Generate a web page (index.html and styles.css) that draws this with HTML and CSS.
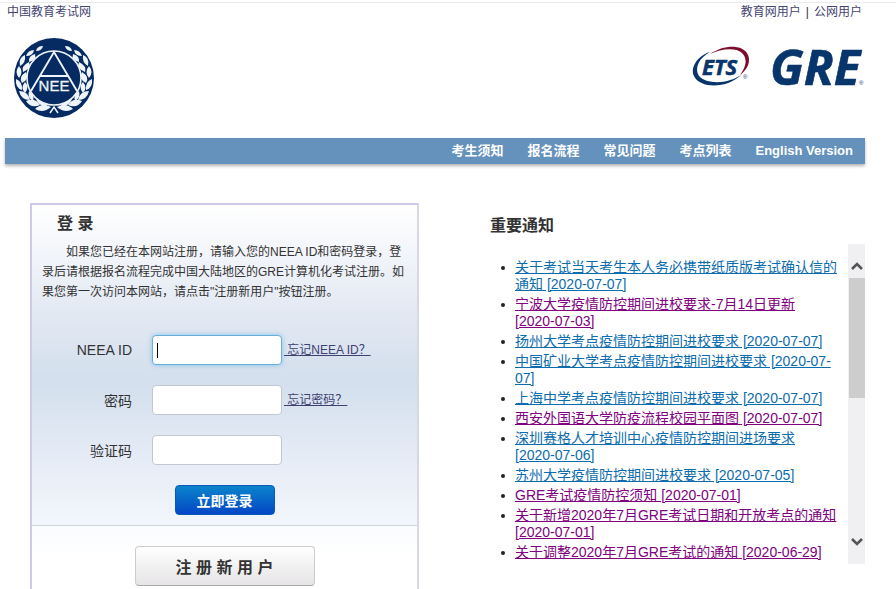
FILE: index.html
```html
<!DOCTYPE html>
<html lang="zh-CN">
<head>
    <meta charset="UTF-8">
    <meta name="viewport" content="width=device-width, initial-scale=1.0">
    <title>GRE 考试报名</title>
    <link rel="stylesheet" href="styles.css">
</head>
<body>
    <!-- 顶部链接 -->
    <div class="topbar">
        <a href="#">中国教育考试网</a>
        <div class="topbar-right">
            <a href="#">教育网用户</a>
            <span>|</span>
            <a href="#">公网用户</a>
        </div>
    </div>

    <!-- 标志 -->
    <header class="header">
        <svg class="logo-neea" viewBox="0 0 80 80" role="img" aria-label="NEEA">
            <defs>
                <g id="branch" fill="#eef4fa">
                    <path d="M29 8q-6 0-7 5q6 0 7-5z"/>
                    <path d="M20 12q-6 0-8 6q7 0 8-6z"/>
                    <path d="M21 16q2 6-6 8q-1-6 6-8z"/>
                    <path d="M11 17q-7 3-5 11q6-3 5-11z"/>
                    <path d="M15 24q3 6-6 10q-2-6 6-10z"/>
                    <path d="M5 28q-5 6 0 12q5-6 0-12z"/>
                    <path d="M12 34q4 7-4 11q-4-6 4-11z"/>
                    <path d="M2 41q-1 9 6 11q1-8-6-11z"/>
                    <path d="M11 44q5 5 0 11q-5-5 0-11z"/>
                    <path d="M5 53q2 9 11 9q-2-9-11-9z"/>
                    <path d="M15 53q6 3 4 10q-6-3-4-10z"/>
                    <path d="M12 63q5 8 14 4q-5-8-14-4z"/>
                    <path d="M22 61q8 0 11 7q-8 1-11-7z"/>
                    <path d="M21 71q8 5 16-2q-9-5-16 2z"/>
                </g>
            </defs>
            <circle cx="40" cy="40" r="40" fill="#062a62"/>
            <use href="#branch"/>
            <use href="#branch" transform="matrix(-1 0 0 1 80 0)"/>
            <path d="M36 75l4-6 4 6" fill="none" stroke="#eef4fa" stroke-width="1.5"/>
            <circle cx="40" cy="40" r="27" fill="#062a62" stroke="#eef4fa" stroke-width="1.6"/>
            <path d="M17 53L40 14l23 39M26 38h28" fill="none" stroke="#eef4fa" stroke-width="1.9"/>
            <text class="neea-text" x="40" y="53">NEE</text>
        </svg>
        <div class="brands">
            <svg class="logo-ets" viewBox="0 0 58 42" role="img" aria-label="ETS">
                <path d="M18 6C5 10-2 22 2 30C8 43 36 43 50 28C38 38 15 39 7 30C2 22 7 12 18 6z" fill="#08356b"/>
                <path d="M18 8C31-1 49-2 55 7C60 15 55 24 48 29C54 21 56 13 50 7C43 1 29 3 18 8z" fill="#7d0d2c"/>
                <text class="ets-text" x="10" y="29">ETS</text>
                <text class="reg-text" x="51" y="33">®</text>
            </svg>
            <svg class="logo-gre" viewBox="0 0 92 42" role="img" aria-label="GRE">
                <text class="gre-text" x="-2" y="39">GRE</text>
                <text class="reg-text" x="87" y="39">®</text>
            </svg>
        </div>
    </header>

    <!-- 导航 -->
    <nav class="nav">
        <a href="#">考生须知</a>
        <a href="#">报名流程</a>
        <a href="#">常见问题</a>
        <a href="#">考点列表</a>
        <a href="#">English Version</a>
    </nav>

    <main class="main">
        <!-- 登录框 -->
        <section class="login">
            <div class="login-top">
                <h2 class="login-title">登 录</h2>
                <p class="login-tip">如果您已经在本网站注册，请输入您的NEEA ID和密码登录，登录后请根据报名流程完成中国大陆地区的GRE计算机化考试注册。如果您第一次访问本网站，请点击"注册新用户"按钮注册。</p>
                <form class="login-form">
                    <div class="row">
                        <label for="neeaId">NEEA ID</label>
                        <input class="active" type="text" id="neeaId">
                        <a href="#">&nbsp;忘记NEEA ID？</a>
                    </div>
                    <div class="row">
                        <label for="password">密码</label>
                        <input type="password" id="password">
                        <a href="#">&nbsp;忘记密码？</a>
                    </div>
                    <div class="row">
                        <label for="checkCode">验证码</label>
                        <input type="text" id="checkCode">
                    </div>
                    <button class="btn-login" type="submit">立即登录</button>
                </form>
            </div>
            <div class="login-bottom">
                <button class="btn-register" type="button">注 册 新 用 户</button>
            </div>
        </section>

        <!-- 重要通知 -->
        <section class="notice">
            <h2 class="notice-title">重要通知</h2>
            <div class="notice-box">
                <ul class="notice-list">
                    <li><a href="#">关于考试当天考生本人务必携带纸质版考试确认信的通知 [2020-07-07]</a></li>
                    <li><a class="visited" href="#">宁波大学疫情防控期间进校要求-7月14日更新 [2020-07-03]</a></li>
                    <li><a href="#">扬州大学考点疫情防控期间进校要求 [2020-07-07]</a></li>
                    <li><a href="#">中国矿业大学考点疫情防控期间进校要求 [2020-07-07]</a></li>
                    <li><a href="#">上海中学考点疫情防控期间进校要求 [2020-07-07]</a></li>
                    <li><a class="visited" href="#">西安外国语大学防疫流程校园平面图 [2020-07-07]</a></li>
                    <li><a href="#">深圳赛格人才培训中心疫情防控期间进场要求 [2020-07-06]</a></li>
                    <li><a href="#">苏州大学疫情防控期间进校要求 [2020-07-05]</a></li>
                    <li><a class="visited" href="#">GRE考试疫情防控须知 [2020-07-01]</a></li>
                    <li><a class="visited" href="#">关于新增2020年7月GRE考试日期和开放考点的通知 [2020-07-01]</a></li>
                    <li><a class="visited" href="#">关于调整2020年7月GRE考试的通知 [2020-06-29]</a></li>
                </ul>
                <div class="scrollbar">
                    <button type="button" aria-label="向上滚动">
                        <svg viewBox="0 0 12 9"><path d="M1 8l5-5 5 5" fill="none" stroke="#555" stroke-width="2.6"/></svg>
                    </button>
                    <div class="thumb"></div>
                    <button type="button" aria-label="向下滚动">
                        <svg viewBox="0 0 12 9"><path d="M1 1l5 5 5-5" fill="none" stroke="#555" stroke-width="2.6"/></svg>
                    </button>
                </div>
            </div>
        </section>
    </main>
</body>
</html>
```
FILE: styles.css
```css
* {
    box-sizing: border-box;
}

body {
    display: flex;
    flex-direction: column;
    min-height: 100vh;
    margin: 0;
    padding: 2px 31px 0 5px;
    background: linear-gradient(#e9ebee, #e9ebee) 0 2px / 100% 1px no-repeat #fff;
    color: #333;
    font-family: "Liberation Sans", Arial, "Noto Sans CJK SC", sans-serif;
    font-size: 12px;
}

h2,
p,
ul {
    margin: 0;
    padding: 0;
}

button,
input {
    font-family: inherit;
}

/* 顶部链接 */
.topbar {
    display: flex;
    justify-content: space-between;
    padding: 0 3px 0 2px;
    line-height: 20px;
}

.topbar-right {
    display: flex;
    gap: 5px;
}

.topbar a {
    color: #444470;
    text-decoration: none;
}

/* 标志 */
.header {
    display: flex;
    justify-content: space-between;
    align-items: flex-start;
    padding: 16px 1px 20px 9px;
}

.logo-neea {
    width: 80px;
    height: 80px;
}

.neea-text {
    fill: #eef4fa;
    stroke: #eef4fa;
    stroke-width: 0.3px;
    font-family: "Liberation Sans", Arial, sans-serif;
    font-size: 15px;
    text-anchor: middle;
}

.brands {
    display: flex;
    gap: 22px;
    padding-top: 8px;
}

.logo-ets {
    width: 58px;
    height: 42px;
    overflow: visible;
}

.logo-gre {
    width: 92px;
    height: 42px;
    overflow: visible;
}

.ets-text,
.gre-text {
    fill: #08356b;
    stroke: #08356b;
    stroke-width: 0.6px;
    font-family: "Open Sans", "Noto Sans", sans-serif;
    font-weight: bold;
    font-style: italic;
}

.ets-text {
    font-size: 22px;
}

.gre-text {
    font-size: 49px;
}

.reg-text {
    fill: #08356b;
    font-size: 6px;
}

/* 导航 */
.nav {
    display: flex;
    justify-content: flex-end;
    gap: 24px;
    padding: 0 12px;
    background: #6591bd;
    box-shadow: 0 2px 3px rgba(0, 0, 0, 0.3);
    line-height: 26px;
}

.nav a {
    color: #fff;
    font-size: 13px;
    font-weight: bold;
    text-decoration: none;
}

.main {
    display: flex;
    flex: 1;
    justify-content: space-between;
    gap: 71px;
    padding: 39px 0 0 25px;
}

/* 登录框 */
.login {
    flex: 385;
    border: 2px solid #ccc9ec;
    border-right-color: #d7d8e0;
    border-bottom: 0;
}

.login-top {
    padding: 9px 10px 10px;
    border-bottom: 1px solid #ccd6de;
    background: linear-gradient(#fff 0%, #e3e9f3 33%, #d3dfed 55%, #e6ecf6 80%, #f3f7fc 100%);
}

.login-title {
    padding-left: 15px;
    font-size: 16px;
    line-height: 20px;
}

.login-tip {
    padding-top: 8px;
    line-height: 20px;
    text-indent: 24px;
}

.login-form {
    display: flex;
    flex-direction: column;
    gap: 20px;
    padding-top: 33px;
}

.row {
    display: flex;
    align-items: center;
    height: 30px;
}

.row label {
    width: 90px;
    margin-right: 20px;
    font-size: 14px;
    text-align: right;
}

.row input {
    width: 130px;
    height: 30px;
    margin-right: 2px;
    padding: 0 5px;
    border: 1px solid #c3c8d0;
    border-radius: 4px;
    background: #fff;
    font-size: 14px;
    outline: none;
}

/* 当前输入框 */
.row input.active {
    border-color: #66afd9;
    background: linear-gradient(#000, #000) 4px center / 1px 15px no-repeat #fff;
    box-shadow: 0 0 5px rgba(82, 168, 236, 0.6);
}

.row a {
    padding-bottom: 4px;
    color: #404070;
}

.btn-login {
    align-self: center;
    width: 100px;
    height: 30px;
    border: 1px solid #0859b8;
    border-radius: 4px;
    background: linear-gradient(#0a84cb, #0546c6);
    color: #fff;
    font-size: 14px;
    font-weight: bold;
}

.login-bottom {
    padding: 20px 0 3px;
    background: linear-gradient(#fafcff, #fff 30px);
    text-align: center;
}

.btn-register {
    width: 180px;
    height: 40px;
    border: 1px solid #ccc;
    border-bottom-color: #aaa;
    border-radius: 4px;
    background: linear-gradient(#fff, #e6e4e6);
    color: #333;
    font-size: 16px;
    font-weight: bold;
}

/* 重要通知 */
.notice {
    flex: 375;
    padding-top: 13px;
}

.notice-title {
    font-size: 16px;
    line-height: 20px;
}

.notice-box {
    display: flex;
    height: 320px;
    margin-top: 8px;
}

.notice-list {
    flex: 1;
    overflow: hidden;
    padding: 15px 10px 0 25px;
    font-size: 14px;
    line-height: 17px;
    list-style: none;
}

.notice-list li {
    margin-bottom: 3px;
}

.notice-list li::before {
    content: "";
    float: left;
    width: 4px;
    height: 4px;
    margin: 7px 0 0 -14px;
    border-radius: 50%;
    background: #222;
}

.notice-list a {
    color: #0b6cae;
}

.notice-list a.visited {
    color: #800080;
}

/* 滚动条 */
.scrollbar {
    display: flex;
    flex-direction: column;
    width: 17px;
    background: #f0eff1;
}

.scrollbar button {
    display: flex;
    align-items: flex-end;
    justify-content: center;
    height: 34px;
    padding: 0 0 8px;
    border: 0;
    background: transparent;
}

.scrollbar button:last-child {
    align-items: flex-start;
    margin-top: auto;
    height: 26px;
    padding: 0;
}

.scrollbar svg {
    width: 12px;
    height: 9px;
}

.thumb {
    height: 120px;
    margin-left: 1px;
    background: #cdcdcd;
}
```
